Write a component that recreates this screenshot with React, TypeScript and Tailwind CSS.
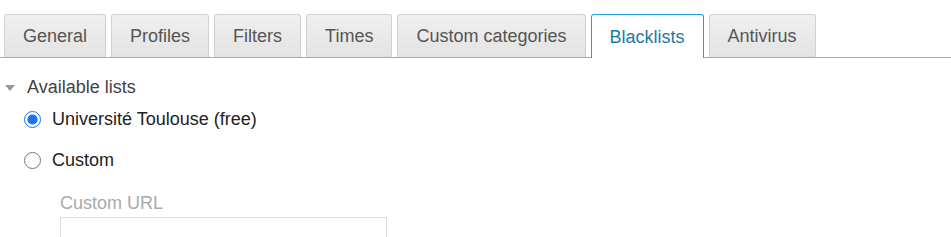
import { useState } from "react";

const TABS = ["General", "Profiles", "Filters", "Times", "Custom categories", "Blacklists", "Antivirus"];

export default function App() {
  const [active, setActive] = useState("Blacklists");
  const [list, setList] = useState("toulouse");

  return (
    <div className="h-[237px] overflow-hidden bg-white pt-[14px] font-['Liberation_Sans',Arial,sans-serif] text-[18px] leading-[22px]">
      <div className="flex gap-[5px] border-b border-[#aaaaaa] pl-[4px]">
        {TABS.map((tab) => {
          const isActive = tab === active;
          return (
            <button
              key={tab}
              type="button"
              onClick={() => setActive(tab)}
              className={
                isActive
                  ? "-mb-px h-[44px] rounded-t-[3px] border border-b-0 border-[#1ea0dc] bg-white px-[18px] text-[#1b7aa6]"
                  : "h-[43px] rounded-t-[3px] border border-b-0 border-[#d0d0d0] bg-gradient-to-b from-[#f0f0f0] to-[#e3e3e3] px-[18px] text-[#555555]"
              }
            >
              {tab}
            </button>
          );
        })}
      </div>

      <div className="pt-[18px]">
        <div className="flex items-center">
          <svg width="10" height="6" viewBox="0 0 10 6" className="ml-[5px] mr-[12px] mt-[2px]">
            <path d="M0 0 L10 0 L5 6 Z" fill="#999999" />
          </svg>
          <span className="text-[#444444]">Available lists</span>
        </div>

        <label className="mt-[10px] flex items-center pl-[24px] text-[#222222]">
          <input
            type="radio"
            name="list"
            checked={list === "toulouse"}
            onChange={() => setList("toulouse")}
            className="m-0 h-[17px] w-[17px] accent-[#1a73e8]"
          />
          <span className="ml-[11px]">Université Toulouse (free)</span>
        </label>

        <label className="mt-[19px] flex items-center pl-[24px] text-[#222222]">
          <input
            type="radio"
            name="list"
            checked={list === "custom"}
            onChange={() => setList("custom")}
            className="m-0 h-[17px] w-[17px]"
          />
          <span className="ml-[11px]">Custom</span>
        </label>

        <div className="mt-[21px] pl-[60px]">
          <div className="text-[#aaaaaa]">Custom URL</div>
          <input
            type="text"
            disabled
            className="mt-[3px] h-[34px] w-[327px] border border-[#dddddd] bg-white"
          />
        </div>
      </div>
    </div>
  );
}
